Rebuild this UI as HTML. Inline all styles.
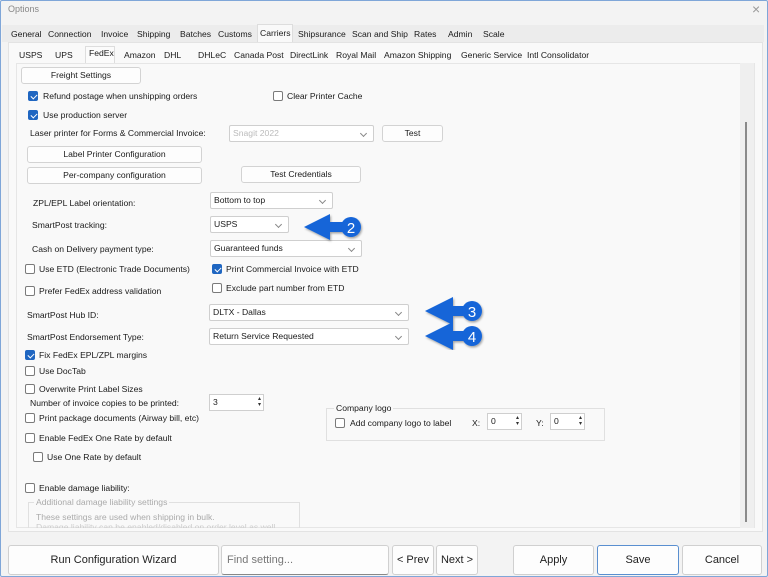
<!DOCTYPE html>
<html><head><meta charset="utf-8"><style>
*{box-sizing:border-box;margin:0;padding:0}
body{width:768px;height:577px;overflow:hidden;background:#f3f3f3;font-family:"Liberation Sans",sans-serif;font-size:8.6px;color:#1a1a1a;position:relative}
.a{position:absolute;white-space:nowrap}
.win{position:absolute;left:0;top:0;width:768px;height:577px;border:1px solid #7fa6d8;border-radius:2px}
.tab{position:absolute;top:27px;height:14px;line-height:14px;font-size:8.6px}
.stab{position:absolute;top:49px;height:13px;line-height:13px;font-size:8.6px}
.btn{position:absolute;background:#fdfdfd;border:1px solid #d3d3d3;border-radius:3px;text-align:center;font-size:8.6px}
.cb{position:absolute;width:10px;height:10px;border:1px solid #7a7a7a;border-radius:2px;background:#fff}
.cb.on{background:#1f66c1;border-color:#1f66c1}
.cb.on::after{content:"";position:absolute;left:2.5px;top:0.5px;width:3px;height:5px;border:solid #fff;border-width:0 1.3px 1.3px 0;transform:rotate(45deg)}
.sel{position:absolute;background:#fff;border:1px solid #cfcfcf;border-radius:2px;font-size:8.6px;padding-left:3px;line-height:15px;height:17px}
.sel::after{content:"";position:absolute;right:7px;top:5px;width:4px;height:4px;border:solid #888;border-width:0 1px 1px 0;transform:rotate(45deg)}
.spin{position:absolute;background:#fff;border:1px solid #cfcfcf;height:17px;font-size:8.6px;padding-left:3px;line-height:15px}
.spin::after{content:"▴\A▾";white-space:pre;position:absolute;right:2px;top:1px;font-size:6px;line-height:6px;color:#333}
.bb{position:absolute;top:545px;height:30px;background:#fdfdfd;border:1px solid #d0d0d0;border-radius:3px;text-align:center;line-height:28px;font-size:11px;color:#222}
</style></head><body>
<div class="win"></div>
<div class="a" style="left:8px;top:4px;color:#888;font-size:9px">Options</div>
<div class="a" style="left:752px;top:1px;color:#999;font-size:14px">×</div>
<div class="a" style="left:2px;top:25px;width:762px;height:17px;background:#ececec"></div>
<div class="tab" style="left:11px">General</div><div class="tab" style="left:48px">Connection</div><div class="tab" style="left:101px">Invoice</div><div class="tab" style="left:137px">Shipping</div><div class="tab" style="left:180px">Batches</div><div class="tab" style="left:218px">Customs</div>
<div class="a" style="left:257px;top:24px;width:36px;height:18px;background:#f9f9f9;border:1px solid #ddd;border-bottom:none"></div>
<div class="tab" style="left:260px;top:26px">Carriers</div><div class="tab" style="left:298px">Shipsurance</div><div class="tab" style="left:352px">Scan and Ship</div><div class="tab" style="left:414px">Rates</div><div class="tab" style="left:448px">Admin</div><div class="tab" style="left:483px">Scale</div>
<div class="a" style="left:8px;top:42px;width:755px;height:490px;background:#f9f9f9;border:1px solid #e3e3e3"></div>
<div class="a" style="left:85px;top:46px;width:30px;height:17px;background:#fbfbfb;border:1px solid #ddd;border-bottom:none"></div>
<div class="stab" style="left:19px">USPS</div><div class="stab" style="left:55px">UPS</div><div class="stab" style="left:89px;top:47px">FedEx</div><div class="stab" style="left:124px">Amazon</div><div class="stab" style="left:164px">DHL</div><div class="stab" style="left:198px">DHLeC</div><div class="stab" style="left:234px">Canada Post</div><div class="stab" style="left:290px">DirectLink</div><div class="stab" style="left:336px">Royal Mail</div><div class="stab" style="left:384px">Amazon Shipping</div><div class="stab" style="left:461px">Generic Service</div><div class="stab" style="left:527px">Intl Consolidator</div>
<div class="a" style="left:16px;top:63px;width:739px;height:465px;background:#f9f9f9;border:1px solid #e6e6e6"></div>
<div class="a" style="left:740px;top:63px;width:14px;height:465px;background:#efefef"></div>
<div class="a" style="left:745px;top:122px;width:2px;height:400px;background:#8a8a8a"></div>
<div class="btn" style="left:21px;top:67px;width:120px;height:17px;line-height:15px">Freight Settings</div>
<div class="cb on" style="left:28px;top:91px"></div><div class="a" style="left:43px;top:91px">Refund postage when unshipping orders</div>
<div class="cb" style="left:273px;top:91px"></div><div class="a" style="left:287px;top:91px">Clear Printer Cache</div>
<div class="cb on" style="left:28px;top:110px"></div><div class="a" style="left:43px;top:110px">Use production server</div>
<div class="a" style="left:30px;top:128px">Laser printer for Forms &amp; Commercial Invoice:</div>
<div class="sel" style="left:229px;top:125px;width:145px;color:#bbb">Snagit 2022</div>
<div class="btn" style="left:382px;top:125px;width:61px;height:17px;line-height:15px">Test</div>
<div class="btn" style="left:27px;top:146px;width:175px;height:17px;line-height:15px">Label Printer Configuration</div>
<div class="btn" style="left:27px;top:167px;width:175px;height:17px;line-height:15px">Per-company configuration</div>
<div class="btn" style="left:241px;top:166px;width:120px;height:17px;line-height:15px">Test Credentials</div>
<div class="a" style="left:33px;top:198px">ZPL/EPL Label orientation:</div>
<div class="sel" style="left:210px;top:192px;width:123px">Bottom to top</div>
<div class="a" style="left:32px;top:220px">SmartPost tracking:</div>
<div class="sel" style="left:210px;top:216px;width:79px">USPS</div>
<div class="a" style="left:32px;top:244px">Cash on Delivery payment type:</div>
<div class="sel" style="left:210px;top:240px;width:152px">Guaranteed funds</div>
<div class="cb" style="left:25px;top:264px"></div><div class="a" style="left:39px;top:264px">Use ETD (Electronic Trade Documents)</div>
<div class="cb on" style="left:212px;top:264px"></div><div class="a" style="left:226px;top:264px">Print Commercial Invoice with ETD</div>
<div class="cb" style="left:25px;top:286px"></div><div class="a" style="left:39px;top:286px">Prefer FedEx address validation</div>
<div class="cb" style="left:212px;top:283px"></div><div class="a" style="left:226px;top:283px">Exclude part number from ETD</div>
<div class="a" style="left:27px;top:310px">SmartPost Hub ID:</div>
<div class="sel" style="left:209px;top:304px;width:200px">DLTX - Dallas</div>
<div class="a" style="left:27px;top:332px">SmartPost Endorsement Type:</div>
<div class="sel" style="left:209px;top:328px;width:200px">Return Service Requested</div>
<div class="cb on" style="left:25px;top:350px"></div><div class="a" style="left:39px;top:350px">Fix FedEx EPL/ZPL margins</div>
<div class="cb" style="left:25px;top:366px"></div><div class="a" style="left:39px;top:366px">Use DocTab</div>
<div class="cb" style="left:25px;top:384px"></div><div class="a" style="left:39px;top:384px">Overwrite Print Label Sizes</div>
<div class="a" style="left:30px;top:398px">Number of invoice copies to be printed:</div>
<div class="spin" style="left:209px;top:394px;width:55px">3</div>
<div class="cb" style="left:25px;top:413px"></div><div class="a" style="left:39px;top:413px">Print package documents (Airway bill, etc)</div>
<div class="cb" style="left:25px;top:433px"></div><div class="a" style="left:39px;top:433px">Enable FedEx One Rate by default</div>
<div class="cb" style="left:33px;top:452px"></div><div class="a" style="left:47px;top:452px">Use One Rate by default</div>
<div class="a" style="left:326px;top:408px;width:279px;height:33px;border:1px solid #e0e0e0"></div>
<div class="a" style="left:334px;top:403px;background:#f9f9f9;padding:0 2px">Company logo</div>
<div class="cb" style="left:335px;top:418px"></div><div class="a" style="left:350px;top:418px">Add company logo to label</div>
<div class="a" style="left:472px;top:418px">X:</div><div class="spin" style="left:487px;top:413px;width:35px">0</div>
<div class="a" style="left:536px;top:418px">Y:</div><div class="spin" style="left:550px;top:413px;width:35px">0</div>
<div class="cb" style="left:25px;top:483px"></div><div class="a" style="left:39px;top:483px">Enable damage liability:</div>
<div class="a" style="left:28px;top:502px;width:272px;height:26px;border:1px solid #e0e0e0;border-bottom:none"></div>
<div class="a" style="left:34px;top:497px;color:#aaa;background:#f9f9f9;padding:0 2px">Additional damage liability settings</div>
<div class="a" style="left:36px;top:512px;color:#aaa">These settings are used when shipping in bulk.</div>
<div class="a" style="left:36px;top:523px;color:#ccc;height:5px;overflow:hidden;line-height:9px">Damage liability can be enabled/disabled on order level as well.</div>
<div class="bb" style="left:8px;width:211px">Run Configuration Wizard</div>
<div class="bb" style="left:221px;width:168px;text-align:left;padding-left:5px;color:#777;border-bottom:1px solid #888">Find setting...</div>
<div class="bb" style="left:392px;width:42px">&lt; Prev</div>
<div class="bb" style="left:436px;width:42px">Next &gt;</div>
<div class="bb" style="left:513px;width:81px">Apply</div>
<div class="bb" style="left:597px;width:82px;border-color:#5a8fd0">Save</div>
<div class="bb" style="left:682px;width:80px">Cancel</div>
<svg class="a" style="left:300px;top:210px" width="200" height="140" viewBox="300 210 200 140">
<defs><filter id="s"><feDropShadow dx="1" dy="1.5" stdDeviation="1" flood-opacity="0.35"/></filter></defs>
<g fill="#1565d8" filter="url(#s)">
<path d="M304 227 L330 214 L330 222 L345 222 L345 232 L330 232 L330 240 Z"/><circle cx="351" cy="227" r="10"/>
<path d="M425 311 L453 297 L453 306 L466 306 L466 316 L453 316 L453 325 Z"/><circle cx="472" cy="311" r="10"/>
<path d="M425 336 L453 322 L453 331 L466 331 L466 341 L453 341 L453 350 Z"/><circle cx="472" cy="336" r="10"/>
</g>
<g fill="#fff" font-family="Liberation Sans" font-size="15" text-anchor="middle"><text x="351" y="233">2</text><text x="472" y="317">3</text><text x="472" y="342">4</text></g>
</svg>
</body></html>
